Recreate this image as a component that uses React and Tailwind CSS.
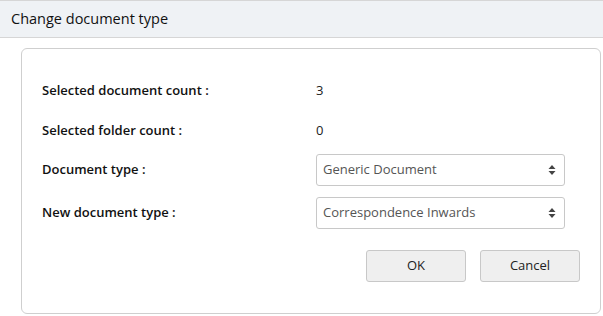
import { useState } from 'react';

const font = { fontFamily: '"Open Sans", "Noto Sans", sans-serif' };

function UpDown() {
  return (
    <svg width="8" height="12" viewBox="0 0 8 12" aria-hidden="true" className="shrink-0">
      <path d="M4 1 L7.5 5 H0.5 Z" fill="#444" />
      <path d="M4 11 L7.5 7 H0.5 Z" fill="#444" />
    </svg>
  );
}

function SelectBox({ value, options, onChange }) {
  return (
    <div className="relative h-8 w-[249px]">
      <select
        value={value}
        onChange={(e) => onChange(e.target.value)}
        className="h-full w-full appearance-none rounded-[3px] border border-[#c8c8c8] bg-white pl-[6px] pr-6 text-[13px] text-[#555] outline-none"
        style={font}
      >
        {options.map((o) => (
          <option key={o}>{o}</option>
        ))}
      </select>
      <div className="pointer-events-none absolute right-[9px] top-[10px]">
        <UpDown />
      </div>
    </div>
  );
}

export default function App() {
  const [docType, setDocType] = useState('Generic Document');
  const [newType, setNewType] = useState('Correspondence Inwards');

  return (
    <div className="h-[316px] w-[603px] overflow-hidden bg-white text-[#222]" style={font}>
      <div className="flex h-[38px] items-center border-y border-[#d6d6d6] bg-[#eff2f5] pl-[11px]">
        <h1 className="text-[14.5px] text-[#111]">Change document type</h1>
      </div>

      <div className="ml-[21px] mt-[10px] h-[266px] w-[580px] rounded-[6px] border border-[#cfcfcf] px-5 pt-[22px]">
        <div className="flex h-10 items-center">
          <span className="w-[274px] text-[13px] font-semibold text-[#111]">Selected document count :</span>
          <span className="text-[13px]">3</span>
        </div>
        <div className="flex h-10 items-center">
          <span className="w-[274px] text-[13px] font-semibold text-[#111]">Selected folder count :</span>
          <span className="text-[13px]">0</span>
        </div>
        <div className="mt-[3px] flex items-center">
          <span className="w-[274px] text-[13px] font-semibold text-[#111]">Document type :</span>
          <SelectBox
            value={docType}
            onChange={setDocType}
            options={['Generic Document', 'Correspondence Inwards', 'Correspondence Outwards']}
          />
        </div>
        <div className="mt-[11px] flex items-center">
          <span className="w-[274px] text-[13px] font-semibold text-[#111]">New document type :</span>
          <SelectBox
            value={newType}
            onChange={setNewType}
            options={['Correspondence Inwards', 'Correspondence Outwards', 'Generic Document']}
          />
        </div>
        <div className="mt-[21px] flex justify-end gap-[14px]">
          <button
            type="button"
            className="h-8 w-[100px] rounded-[3px] border border-[#c8c8c8] bg-[#efefef] text-[13px] text-[#222]"
          >
            OK
          </button>
          <button
            type="button"
            className="h-8 w-[100px] rounded-[3px] border border-[#c8c8c8] bg-[#efefef] text-[13px] text-[#222]"
          >
            Cancel
          </button>
        </div>
      </div>
    </div>
  );
}
